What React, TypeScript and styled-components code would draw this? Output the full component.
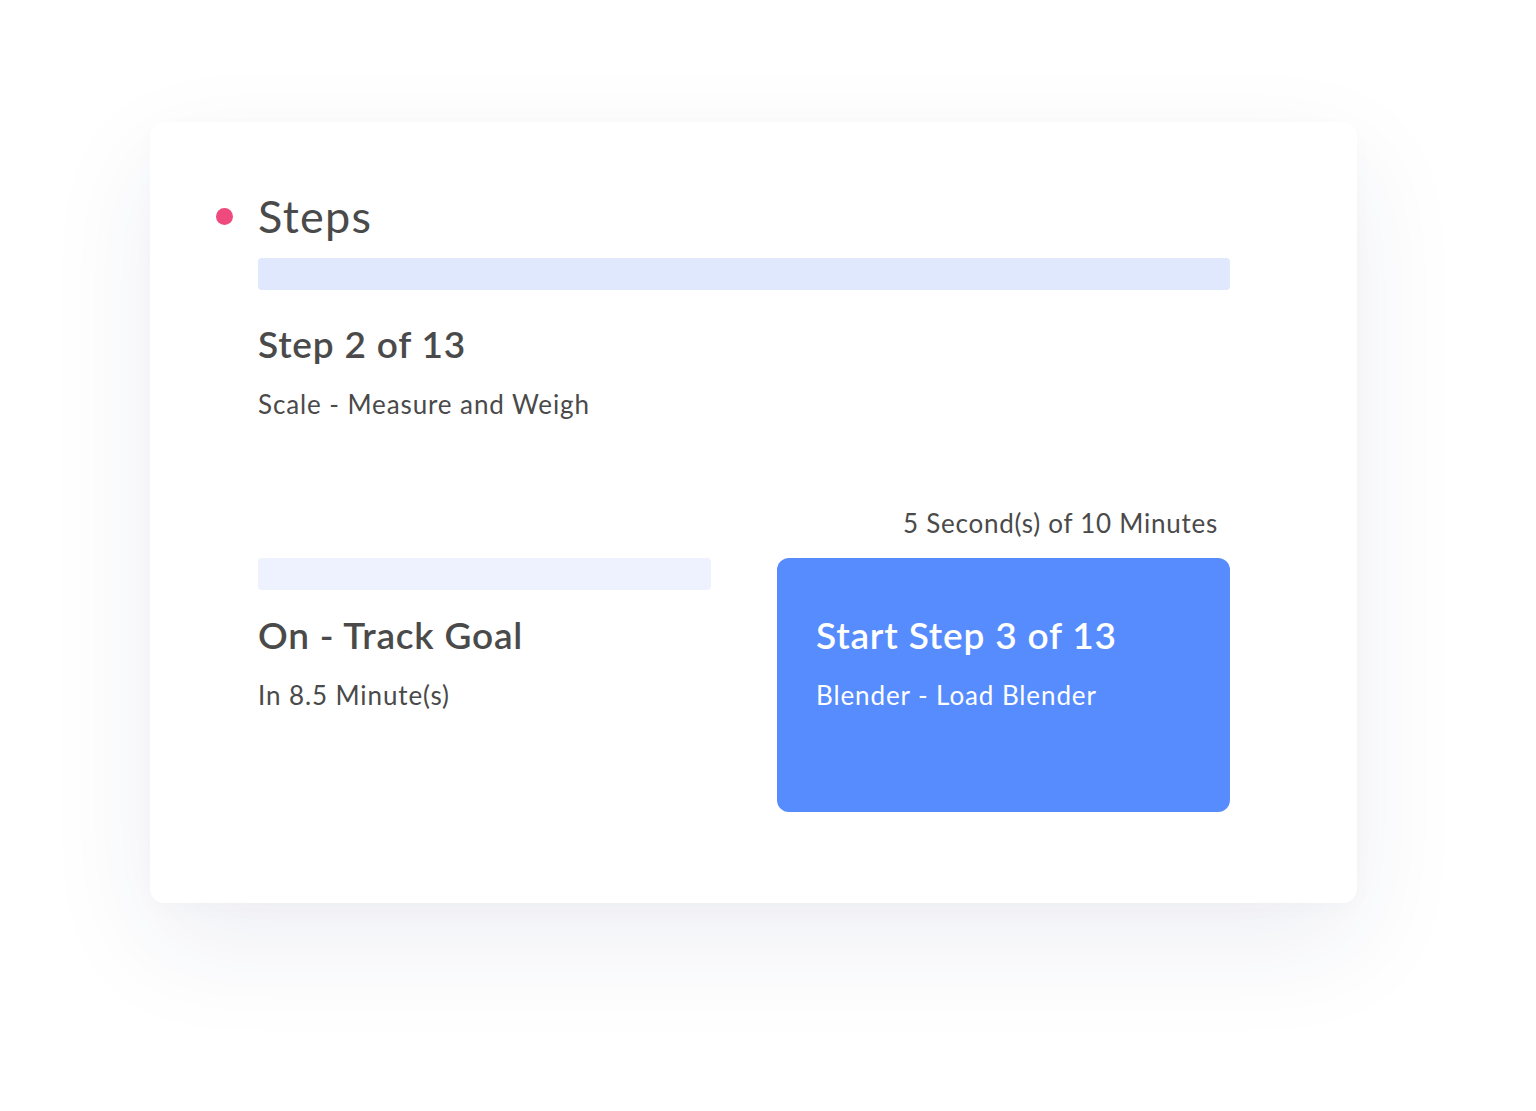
import React from "react";
import styled, { createGlobalStyle } from "styled-components";

const GlobalStyle = createGlobalStyle`
  html, body {
    margin: 0;
    padding: 0;
    background: #ffffff;
  }
  body {
    font-family: "Lato", "Noto Sans", sans-serif;
    color: #4a4a4a;
  }
`;

const Page = styled.div`
  width: 1536px;
  height: 1111px;
  box-sizing: border-box;
  padding: 122px 179px 0 150px;
  background: #ffffff;
`;

const Card = styled.section`
  box-sizing: border-box;
  width: 1207px;
  height: 781px;
  background: #ffffff;
  border-radius: 14px;
  box-shadow: 0 40px 110px rgba(40, 52, 110, 0.08), 0 6px 24px rgba(40, 52, 110, 0.02);
  padding: 68px 127px 0 66px;
  display: grid;
  grid-template-columns: 42px 1fr;
  align-content: start;
`;

const Dot = styled.span`
  width: 17px;
  height: 17px;
  border-radius: 50%;
  background: #ee4a7e;
  align-self: center;
`;

const Heading = styled.h1`
  margin: 0;
  font-size: 45px;
  line-height: 52px;
  font-weight: 400;
  color: #4a4a4a;
  letter-spacing: 1.3px;
`;

const Body = styled.div`
  grid-column: 2;
  display: flex;
  flex-direction: column;
  padding-top: 16px;
`;

const Bar = styled.div<{ $tone: "strong" | "soft" }>`
  height: 32px;
  border-radius: 4px;
  background: ${(p) => (p.$tone === "strong" ? "#dfe8fd" : "#edf2fe")};
`;

const Title = styled.h2<{ $light?: boolean }>`
  margin: 0;
  font-size: 37px;
  line-height: 44px;
  font-weight: 600;
  letter-spacing: 0.8px;
  white-space: nowrap;
  color: ${(p) => (p.$light ? "#ffffff" : "#4a4a4a")};
`;

const Sub = styled.p<{ $light?: boolean }>`
  margin: 22px 0 0;
  font-size: 26px;
  line-height: 32px;
  font-weight: 400;
  letter-spacing: 0.9px;
  white-space: nowrap;
  color: ${(p) => (p.$light ? "#ffffff" : "#4a4a4a")};
`;

const StepBlock = styled.div`
  padding-top: 32px;
`;

const Bottom = styled.div`
  margin-top: 87px;
  display: grid;
  grid-template-columns: 1fr 1fr;
  column-gap: 66px;
  row-gap: 19px;
`;

const TimeLabel = styled.div`
  grid-column: 2;
  text-align: right;
  padding-right: 12px;
  font-size: 26px;
  line-height: 32px;
  letter-spacing: 0.75px;
  color: #4a4a4a;
`;

const GoalColumn = styled.div`
  grid-column: 1;
  grid-row: 2;
  display: flex;
  flex-direction: column;
`;

const GoalText = styled.div`
  padding-top: 23px;
`;

const StartButton = styled.button`
  grid-column: 2;
  grid-row: 2;
  height: 254px;
  box-sizing: border-box;
  border: none;
  border-radius: 12px;
  background: #568cfe;
  padding: 55px 39px 0;
  text-align: left;
  font-family: inherit;
  display: flex;
  flex-direction: column;
  align-items: flex-start;
  cursor: pointer;
`;

export default function App() {
  return (
    <>
      <GlobalStyle />
      <Page>
        <Card>
          <Dot />
          <Heading>Steps</Heading>
          <Body>
            <Bar $tone="strong" />
            <StepBlock>
              <Title>Step 2 of 13</Title>
              <Sub>Scale - Measure and Weigh</Sub>
            </StepBlock>
            <Bottom>
              <TimeLabel>5 Second(s) of 10 Minutes</TimeLabel>
              <GoalColumn>
                <Bar $tone="soft" />
                <GoalText>
                  <Title>On - Track Goal</Title>
                  <Sub>In 8.5 Minute(s)</Sub>
                </GoalText>
              </GoalColumn>
              <StartButton>
                <Title $light>Start Step 3 of 13</Title>
                <Sub $light>Blender - Load Blender</Sub>
              </StartButton>
            </Bottom>
          </Body>
        </Card>
      </Page>
    </>
  );
}
